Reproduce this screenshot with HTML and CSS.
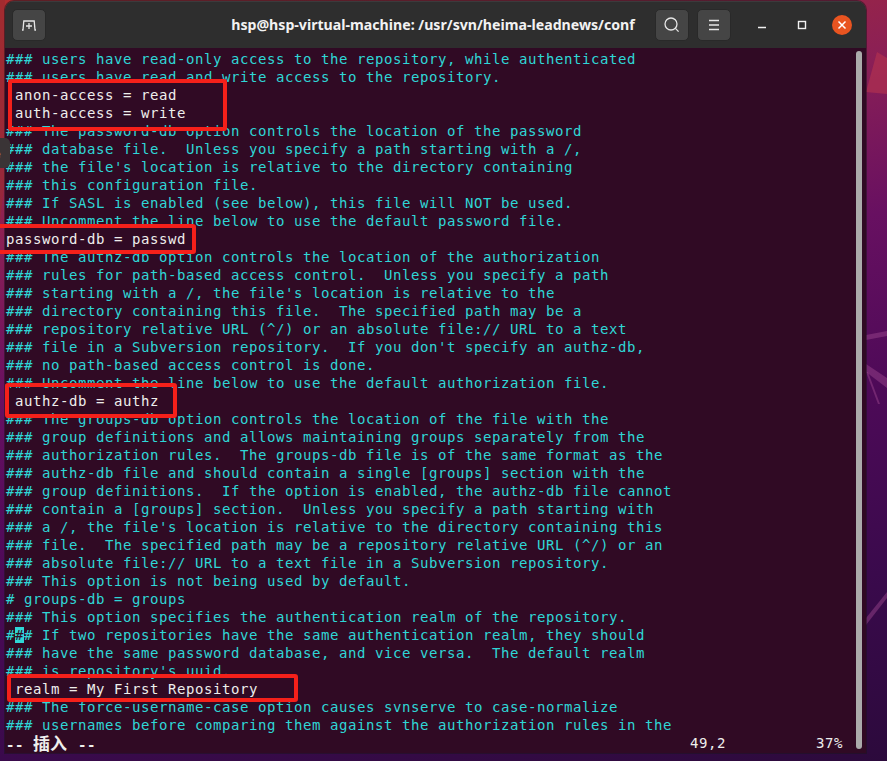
FILE: index.html
```html
<!DOCTYPE html>
<html lang="en">
<head>
<meta charset="utf-8">
<title>Terminal</title>
<link rel="stylesheet" href="styles.css">
</head>
<body>
<svg class="wallpaper" width="887" height="761" viewBox="0 0 887 761">
  <polygon class="wp-a" points="866,92 877,52 887,58 887,94"/>
  <polygon class="wp-c" points="866,335 887,331 887,336 866,340"/>
  <polygon class="wp-c" points="866,364 887,378 887,388 866,372"/>
  <polygon class="wp-c" points="866,372 868,372 880,404 878,404"/>
  <polygon class="wp-c" points="866,618 887,592 887,598 866,625"/>
  <polygon class="wp-d" points="0,0 5,0 5,180 0,220"/>
</svg>
<div class="window">
  <header class="titlebar">
    <button class="hbtn" aria-label="New tab">
      <svg width="18" height="18" viewBox="0 0 18 18"><path class="ico" d="M2 14 H3 L3.8 5 H14.2 L15 14 H16 M9 7 V13 M6 10 H12"/></svg>
    </button>
    <div class="title">hsp@hsp-virtual-machine: /usr/svn/heima-leadnews/conf</div>
    <div class="controls">
      <button class="hbtn" aria-label="Search">
        <svg width="18" height="18" viewBox="0 0 18 18"><circle class="ico" cx="8" cy="8" r="6"/><path class="ico" d="M12.4 12.4 L15.6 15.6"/></svg>
      </button>
      <button class="hbtn" aria-label="Menu">
        <svg width="18" height="18" viewBox="0 0 18 18"><path class="ico" d="M4 4.5 H14 M4 9 H14 M4 13.5 H14"/></svg>
      </button>
      <div class="wm">
        <svg class="wm-min" width="10" height="10" viewBox="0 0 10 10"><path class="wm-line" d="M1 7.5 H9"/></svg>
        <svg class="wm-max" width="10" height="10" viewBox="0 0 10 10"><rect class="wm-line" x="1.5" y="1.5" width="7" height="7"/></svg>
        <div class="wm-close"><svg width="10" height="10" viewBox="0 0 10 10"><path class="wm-x" d="M1.5 1.5 L8.5 8.5 M8.5 1.5 L1.5 8.5"/></svg></div>
      </div>
    </div>
  </header>
  <main class="terminal">
    <div class="screen">
<pre class="lines"><span class="c">### users have read-only access to the repository, while authenticated
### users have read and write access to the repository.
</span> anon-access = read
 auth-access = write
<span class="c">### The password-db option controls the location of the password
### database file.  Unless you specify a path starting with a /,
### the file's location is relative to the directory containing
### this configuration file.
### If SASL is enabled (see below), this file will NOT be used.
### Uncomment the line below to use the default password file.
</span>password-db = passwd
<span class="c">### The authz-db option controls the location of the authorization
### rules for path-based access control.  Unless you specify a path
### starting with a /, the file's location is relative to the
### directory containing this file.  The specified path may be a
### repository relative URL (^/) or an absolute file:// URL to a text
### file in a Subversion repository.  If you don't specify an authz-db,
### no path-based access control is done.
### Uncomment the line below to use the default authorization file.
</span> authz-db = authz
<span class="c">### The groups-db option controls the location of the file with the
### group definitions and allows maintaining groups separately from the
### authorization rules.  The groups-db file is of the same format as the
### authz-db file and should contain a single [groups] section with the
### group definitions.  If the option is enabled, the authz-db file cannot
### contain a [groups] section.  Unless you specify a path starting with
### a /, the file's location is relative to the directory containing this
### file.  The specified path may be a repository relative URL (^/) or an
### absolute file:// URL to a text file in a Subversion repository.
### This option is not being used by default.
# groups-db = groups
### This option specifies the authentication realm of the repository.
#<span class="cursor">#</span># If two repositories have the same authentication realm, they should
### have the same password database, and vice versa.  The default realm
### is repository's uuid.
</span> realm = My First Repository
<span class="c">### The force-username-case option causes svnserve to case-normalize
### usernames before comparing them against the authorization rules in the
</span></pre>
      <div class="status">
        <div class="mode"><span>-- </span><span class="cjk">插入</span><span> --</span></div>
        <div class="ruler">49,2</div>
        <div class="percent">37%</div>
      </div>
    </div>
    <div class="scrollbar"></div>
  </main>
</div>
<div class="mark mark-1"></div>
<div class="mark mark-2"></div>
<div class="mark mark-3"></div>
<div class="mark mark-4"></div>
<div class="tip"><span class="tip-glyph">e</span></div>
</body>
</html>
```
FILE: styles.css
```css
* { box-sizing: border-box; }
html, body { margin: 0; height: 761px; }
body {
  position: relative;
  overflow: hidden;
  padding: 1px 21px 8px 5px;
  background: linear-gradient(168deg, #b02c2e 0, #a1283f 12%, #8a1f56 26%, #681061 42%, #4e0a58 60%, #3a0a4c 80%, #2c0a3c 100%);
}
.wallpaper { position: absolute; left: 0; top: 0; }
.wp-a { fill: #b8344e; opacity: .6; }
.wp-c { fill: #a04a90; opacity: .45; }
.wp-d { fill: #9a2c30; opacity: .6; }

.window {
  position: relative;
  height: 752px;
  display: flex;
  flex-direction: column;
  border-radius: 9px 9px 0 0;
  overflow: hidden;
  box-shadow: 0 0 0 1px rgba(30, 20, 30, .55);
}
.titlebar {
  height: 47px;
  flex: none;
  display: flex;
  align-items: center;
  padding: 0 14px 0 7px;
  background: #2e2e2e;
  border-top: 1px solid #3c3a3c;
}
.hbtn {
  width: 34px;
  height: 32px;
  padding: 0;
  display: flex;
  align-items: center;
  justify-content: center;
  background: #454545;
  border: 1px solid #292929;
  border-radius: 5px;
}
.ico { fill: none; stroke: #e6e6e6; stroke-width: 1.3; }
.title {
  flex: 1;
  text-align: center;
  padding-left: 165px;
  color: #f2f2f2;
  font: 700 14.15px/20px "Noto Sans", sans-serif;
  white-space: nowrap;
}
.controls { display: flex; align-items: center; gap: 8px; }
.wm { display: flex; align-items: center; margin-left: 18px; }
.wm-line { fill: none; stroke: #f0f0f0; stroke-width: 1.4; }
.wm-min { margin-right: 30px; }
.wm-max { margin-right: 25px; }
.wm-close {
  width: 20px;
  height: 20px;
  border-radius: 50%;
  background: #e95420;
  display: flex;
  align-items: center;
  justify-content: center;
}
.wm-x { fill: none; stroke: #fff; stroke-width: 1.5; }

.terminal {
  flex: 1;
  min-height: 0;
  display: flex;
  background: #300a24;
  padding: 2px 4px 4px 1px;
}
.screen {
  flex: 1;
  min-width: 0;
  display: flex;
  flex-direction: column;
  font-family: "DejaVu Sans Mono", monospace;
  font-size: 14px;
  letter-spacing: 0.57px;
  line-height: 18px;
  color: #eeeeec;
}
.lines { margin: 0; font: inherit; letter-spacing: inherit; white-space: pre; }
.c { color: #2fd6d6; }
.cursor { background: #2fd6d6; color: #300a24; }
.status { display: flex; height: 18px; }
.mode { width: 684px; white-space: pre; font-weight: 700; }
.cjk {
  display: inline-block;
  width: 36px;
  font-family: "Noto Sans CJK SC", sans-serif;
  font-size: 17px;
  letter-spacing: 0;
  font-weight: 700;
  line-height: 18px;
}
.ruler { width: 126px; }
.scrollbar {
  flex: none;
  width: 6px;
  margin: 1px 0 0;
  background: #ababab;
  border-radius: 3px;
}

.mark {
  position: absolute;
  border: 4px solid #f5201a;
  border-radius: 3px;
}
.mark-1 { left: 8px; top: 79px; width: 219px; height: 52px; }
.mark-2 { left: -4px; top: 224px; width: 200px; height: 30px; }
.mark-3 { left: 5px; top: 383px; width: 172px; height: 35px; }
.mark-4 { left: 7px; top: 674px; width: 291px; height: 28px; }

.tip {
  position: absolute;
  left: -6px;
  top: 138px;
  width: 16px;
  height: 30px;
  background: #3a3436;
  border-radius: 5px;
  display: flex;
  align-items: center;
}
.tip-glyph {
  color: #e8d8b0;
  font: 700 11px/1 "Noto Sans", sans-serif;
}
```
